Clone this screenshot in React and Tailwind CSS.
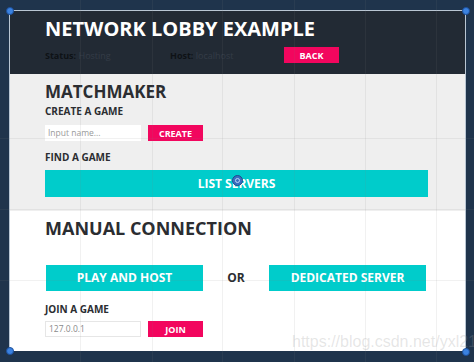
const gridX = [80, 152, 222, 294, 365, 436]
const gridY = [138, 209, 280]

function Dot({ className }) {
  return (
    <span
      className={`absolute w-[8px] h-[8px] rounded-full bg-[#3b82e0] border border-[#1c4f9a] ${className}`}
    />
  )
}

function PinkButton({ label }) {
  return (
    <div className="w-[55px] h-[16px] bg-[#f2065e] flex items-center justify-center text-white text-[9px] font-bold leading-none">
      {label}
    </div>
  )
}

function TealButton({ label, className }) {
  return (
    <div
      className={`bg-[#00cccb] flex items-center justify-center text-white font-bold text-[12px] leading-none ${className}`}
    >
      {label}
    </div>
  )
}

export default function App() {
  return (
    <div
      className="relative w-[474px] h-[362px] bg-[#1f344c] overflow-hidden pt-[10px] pl-[9px]"
      style={{ fontFamily: '"Open Sans", "Liberation Sans", sans-serif' }}
    >
      <div className="w-[457px] h-[341px] flex flex-col border-t border-x border-[#b9c6d3]">
        {/* header */}
        <div className="h-[63px] bg-[#222a34] pl-[35px] pt-[8px]">
          <h1 className="text-white text-[20px] font-bold leading-none h-[20px]">
            NETWORK LOBBY EXAMPLE
          </h1>
          <div className="flex items-center mt-[8px] h-[16px] text-[9px] leading-none">
            <span className="w-[125px]">
              <b className="text-[#0e1216]">Status:</b>{' '}
              <span className="text-[#343c47]">Hosting</span>
            </span>
            <span className="w-[114px]">
              <b className="text-[#0e1216]">Host:</b>{' '}
              <span className="text-[#343c47]">localhost</span>
            </span>
            <PinkButton label="BACK" />
          </div>
        </div>

        {/* matchmaker */}
        <div className="h-[137px] bg-[#efefef] pl-[35px] pt-[9px] text-[#2b2d31]">
          <h2 className="text-[17px] font-bold leading-none">MATCHMAKER</h2>
          <p className="text-[10px] font-bold leading-none mt-[6px]">CREATE A GAME</p>
          <div className="flex gap-[7px] mt-[9px]">
            <div className="w-[96px] h-[16px] bg-white flex items-center pl-[3px] text-[8.5px] text-[#9a9a9a]">
              Input name...
            </div>
            <PinkButton label="CREATE" />
          </div>
          <p className="text-[10px] font-bold leading-none mt-[11px]">FIND A GAME</p>
          <TealButton label="LIST SERVERS" className="w-[383px] h-[27px] mt-[8px]" />
        </div>

        {/* manual connection */}
        <div className="flex-1 bg-white pl-[35px] pt-[8px] text-[#2b2d31]">
          <h2 className="text-[18px] font-bold leading-none">MANUAL CONNECTION</h2>
          <div className="flex items-center mt-[28px] pl-[1px]">
            <TealButton label="PLAY AND HOST" className="w-[157px] h-[26px]" />
            <span className="w-[66px] text-center text-[12px] font-bold">OR</span>
            <TealButton label="DEDICATED SERVER" className="w-[157px] h-[26px]" />
          </div>
          <p className="text-[10px] font-bold leading-none mt-[13px]">JOIN A GAME</p>
          <div className="flex gap-[7px] mt-[7px]">
            <div className="w-[96px] h-[16px] bg-white border border-[#e6e6e6] flex items-center pl-[3px] text-[8.5px] text-[#8a8a8a]">
              127.0.0.1
            </div>
            <PinkButton label="JOIN" />
          </div>
        </div>
      </div>

      {/* scene grid overlay */}
      {gridX.map((x) => (
        <span
          key={x}
          className="absolute top-0 h-full w-px bg-[#8080801c]"
          style={{ left: x }}
        />
      ))}
      {gridY.map((y) => (
        <span
          key={y}
          className="absolute left-0 w-full h-px bg-[#8080801c]"
          style={{ top: y }}
        />
      ))}

      {/* pivot */}
      <svg className="absolute left-[232px] top-[175px]" width="11" height="11" viewBox="0 0 11 11">
        <circle cx="5.5" cy="5.5" r="5" fill="#3a6fc0" stroke="#1f4a8c" />
        <circle cx="5.5" cy="5.5" r="2" fill="none" stroke="#bcd4f5" strokeWidth="1" />
      </svg>

      {/* watermark */}
      <span
        className="absolute left-[292px] top-[334px] text-[16px] leading-none text-[#9a9a9a]/25 whitespace-nowrap"
        style={{ fontFamily: '"Liberation Sans", Arial, sans-serif' }}
      >
        https://blog.csdn.net/yxl219
      </span>

      {/* rect handles */}
      <Dot className="left-[6px] top-[7px]" />
      <Dot className="left-[462px] top-[7px]" />
      <Dot className="left-[6px] top-[347px]" />
      <Dot className="left-[462px] top-[348px]" />
    </div>
  )
}
